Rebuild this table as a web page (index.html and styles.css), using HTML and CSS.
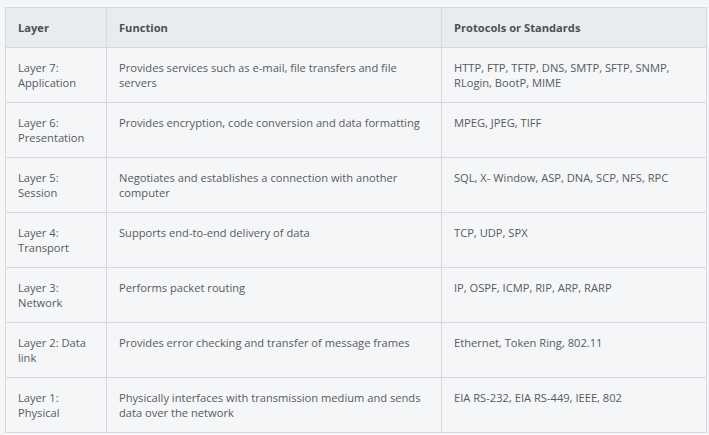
FILE: index.html
```html
<!DOCTYPE html>
<html>
<head>
<meta charset="utf-8">
<link rel="stylesheet" href="styles.css">
</head>
<body>
<table class="osi">
  <colgroup>
    <col class="c1"><col class="c2"><col class="c3">
  </colgroup>
  <thead>
    <tr><th>Layer</th><th>Function</th><th>Protocols or Standards</th></tr>
  </thead>
  <tbody>
    <tr><td>Layer 7: Application</td><td>Provides services such as e-mail, file transfers and file servers</td><td>HTTP, FTP, TFTP, DNS, SMTP, SFTP, SNMP, RLogin, BootP, MIME</td></tr>
    <tr><td>Layer 6: Presentation</td><td>Provides encryption, code conversion and data formatting</td><td>MPEG, JPEG, TIFF</td></tr>
    <tr><td>Layer 5: Session</td><td>Negotiates and establishes a connection with another computer</td><td>SQL, X- Window, ASP, DNA, SCP, NFS, RPC</td></tr>
    <tr><td>Layer 4: Transport</td><td>Supports end-to-end delivery of data</td><td>TCP, UDP, SPX</td></tr>
    <tr><td>Layer 3: Network</td><td>Performs packet routing</td><td>IP, OSPF, ICMP, RIP, ARP, RARP</td></tr>
    <tr><td>Layer 2: Data link</td><td>Provides error checking and transfer of message frames</td><td>Ethernet, Token Ring, 802.11</td></tr>
    <tr><td>Layer 1: Physical</td><td>Physically interfaces with transmission medium and sends data over the network</td><td>EIA RS-232, EIA RS-449, IEEE, 802</td></tr>
  </tbody>
</table>
</body>
</html>
```
FILE: styles.css
```css
html, body {
  margin: 0;
  background: #f5f6f8;
}
body {
  padding: 7px 0 0 5px;
  font-family: "Open Sans", sans-serif;
  font-size: 11.15px;
  line-height: 15px;
  color: #555b61;
}
.osi {
  border-collapse: collapse;
  table-layout: fixed;
  width: 701px;
}
.c1 { width: 101px; }
.c2 { width: 335px; }
.c3 { width: 265px; }
.osi th, .osi td {
  border: 1px solid #d6d8db;
  padding: 12px 12px;
  text-align: left;
  vertical-align: top;
}
.osi th {
  background: #e9ecef;
  font-weight: 700;
  color: #4a5058;
}
.osi td {
  height: 30px;
}
```
